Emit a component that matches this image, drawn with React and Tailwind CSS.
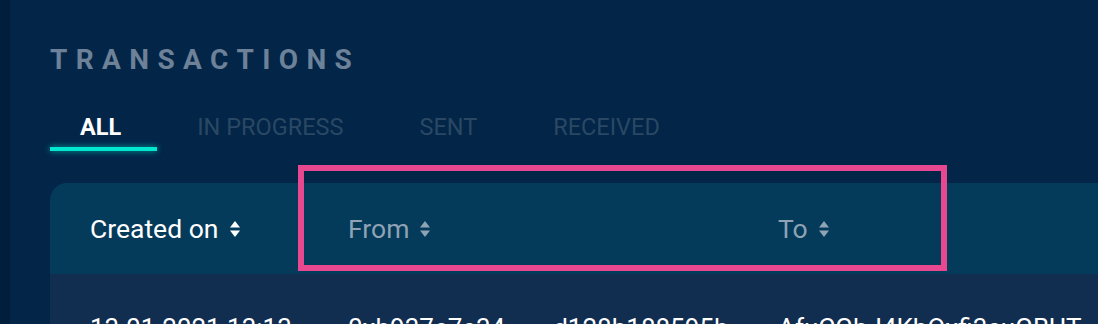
import { useState } from 'react';

const tabs = ['ALL', 'IN PROGRESS', 'SENT', 'RECEIVED'];

function SortIcon({ className }) {
  return (
    <svg width="10" height="16" viewBox="0 0 10 16" className={className} fill="currentColor">
      <path d="M5 0 L10 6.5 L0 6.5 Z" />
      <path d="M0 9.5 L10 9.5 L5 16 Z" />
    </svg>
  );
}

export default function App() {
  const [active, setActive] = useState('ALL');

  return (
    <div className="flex h-[324px] w-full overflow-hidden bg-[#022548] font-['Roboto',sans-serif]">
      <div className="w-[10px] flex-shrink-0 bg-[#021e3d]" />

      <div className="flex-1 pl-[40px] pt-[44px] relative">
        {/* Title */}
        <h1 className="text-[28px] leading-[32px] font-bold tracking-[0.3em] text-[#6d8299]">
          TRANSACTIONS
        </h1>

        {/* Tabs */}
        <div className="flex gap-[16px] mt-[38px]">
          {tabs.map((t) => (
            <button
              key={t}
              onClick={() => setActive(t)}
              className={`relative px-[30px] pb-[11px] text-[23.5px] leading-[26px] ${
                active === t ? 'font-bold text-white' : 'text-[#2a4863]'
              }`}
            >
              {t}
              {active === t && (
                <span className="absolute left-0 bottom-0 h-[4px] w-[107px] bg-[#00e6cf] shadow-[0_0_6px_rgba(0,230,207,0.7)]" />
              )}
            </button>
          ))}
        </div>

        {/* Table */}
        <div className="mt-[32px] rounded-tl-[17px] overflow-hidden">
          <div className="flex items-center h-[91px] bg-[#043a5a] pl-[40px] text-[26.5px]">
            <div className="w-[258px] flex items-center gap-[12px] text-white">
              Created on <SortIcon />
            </div>
            <div className="w-[430px] flex items-center gap-[11px] text-[#8ea3b3]">
              From <SortIcon />
            </div>
            <div className="flex items-center gap-[11px] text-[#8ea3b3]">
              To <SortIcon />
            </div>
          </div>
          <div className="bg-[#112d4f] pl-[40px] pt-[39px] h-[100px] flex text-[26px] leading-[30px] text-white whitespace-nowrap">
            <div className="w-[258px]">13.01.2021 13:13</div>
            <div className="w-[430px] overflow-hidden flex gap-[48px]">
              <span>0xb937e7c34</span>
              <span>d128b188595b</span>
            </div>
            <div>AfuCGbJ4KbQxfi3cuGBUT</div>
          </div>
        </div>

        {/* Highlight overlay */}
        <div className="absolute left-[288px] top-[165px] w-[649px] h-[106px] border-[6px] border-[#e8488f] pointer-events-none" />
      </div>
    </div>
  );
}
